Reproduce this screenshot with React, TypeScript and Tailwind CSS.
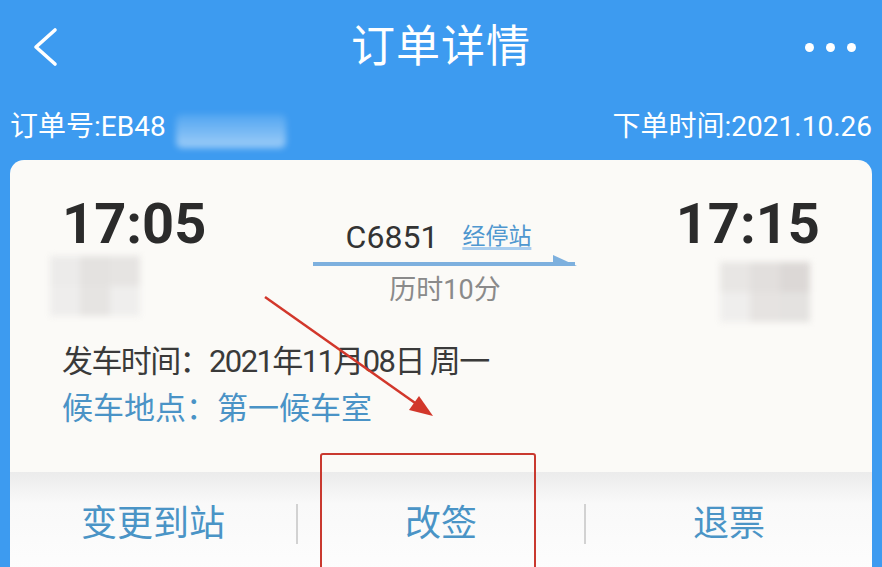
function Blur({ cells }: { cells: string[][] }) {
    return (
        <div className="flex flex-col blur-[3px]">
            {cells.map((row, i) => (
                <div key={i} className="flex">
                    {row.map((c, j) => (
                        <div key={j} className="w-[30px] h-[30px]" style={{ background: c }} />
                    ))}
                </div>
            ))}
        </div>
    )
}

export default function App() {
    return (
        <div className="relative h-[567px] w-[882px] overflow-hidden bg-[#3d9bf0] font-[Roboto,'Noto_Sans_CJK_SC',sans-serif]">
            {/* header */}
            <div className="grid grid-cols-[1fr_auto_1fr] items-center h-[94px] px-[24px] text-white">
                <svg width="30" height="40" viewBox="0 0 30 40" className="ml-[6px]">
                    <polyline points="25,3 6,20 25,37" fill="none" stroke="white" strokeWidth="3.6" strokeLinecap="round" strokeLinejoin="round" />
                </svg>
                <h1 className="text-[44px] leading-none tracking-[1px]">订单详情</h1>
                <div className="flex justify-end gap-[12px] pr-[2px]">
                    <span className="w-[9px] h-[9px] rounded-full bg-white" />
                    <span className="w-[9px] h-[9px] rounded-full bg-white" />
                    <span className="w-[9px] h-[9px] rounded-full bg-white" />
                </div>
            </div>

            {/* order row */}
            <div className="flex items-center justify-between h-[66px] px-[10px] text-white text-[28px]">
                <div className="flex items-center">
                    <span>订单号:EB48</span>
                    <div className="ml-[10px] w-[110px] h-[34px] mt-[8px] rounded-md bg-gradient-to-b from-white/10 to-white/50 blur-[3px]" />
                </div>
                <span>下单时间:2021.10.26</span>
            </div>

            {/* card */}
            <div className="mx-[10px] rounded-t-[14px] bg-[#fbfaf7] overflow-hidden">
                <div className="px-[52px] pt-[36px] pb-[40px]">
                    <div className="flex justify-between items-start">
                        <div className="flex flex-col w-[150px]">
                            <span className="text-[56px] font-bold leading-none text-[#2b2b2b]">17:05</span>
                            <div className="mt-[4px] -ml-[12px]">
                                <Blur cells={[["#ecebea", "#e4e2e0", "#e6e4e2"], ["#eeedec", "#e6e4e2", "#efeeed"]]} />
                            </div>
                        </div>

                        <div className="flex flex-col items-center mt-[23px] ml-[8px]">
                            <div className="flex items-center h-[36px] gap-[24px] mr-[13px]">
                                <span className="text-[32px] text-[#333]">C6851</span>
                                <span className="text-[23px] text-[#4f97cf] underline decoration-[#a9cdee] decoration-[3px] underline-offset-[3px]">经停站</span>
                            </div>
                            <svg width="264" height="12" viewBox="0 0 264 12" className="block">
                                <rect x="0" y="7" width="262" height="4" fill="#7db0de" />
                                <polygon points="240,0 264,11 240,11" fill="#7db0de" />
                            </svg>
                            <span className="mt-[8px] text-[27px] leading-[30px] text-[#8a8a8a]">历时10分</span>
                        </div>

                        <div className="flex flex-col items-end w-[150px]">
                            <span className="text-[56px] font-bold leading-none text-[#2b2b2b]">17:15</span>
                            <div className="mt-[10px] mr-[10px]">
                                <Blur cells={[["#e8e6e4", "#e2dfdd", "#dcd8d6"], ["#efeeed", "#e6e3e1", "#e4e2e0"]]} />
                            </div>
                        </div>
                    </div>

                    <div className="mt-[16px] text-[31px] leading-[47px]">
                        <p className="text-[#3a3a3a] tracking-[-1.6px]">发车时间：2021年11月08日 周一</p>
                        <p className="text-[#4a93c6]">候车地点：第一候车室</p>
                    </div>
                </div>

                <div className="grid grid-cols-[1fr_auto_1fr_auto_1fr] items-center h-[104px] bg-linear-to-b from-[#ebebeb] via-[#f9f9f9] via-30% to-[#fdfdfd] text-[36px] text-[#4a94c6]">
                    <span className="text-center">变更到站</span>
                    <span className="w-[2px] h-[40px] bg-[#d2d2d2]" />
                    <span className="text-center">改签</span>
                    <span className="w-[2px] h-[40px] bg-[#d2d2d2]" />
                    <span className="text-center">退票</span>
                </div>
            </div>

            {/* annotation: red arrow and box */}
            <svg className="absolute left-0 top-0 pointer-events-none" width="882" height="567">
                <line x1="265" y1="297" x2="418" y2="405" stroke="#d2372b" strokeWidth="2.5" />
                <polygon points="409,410 419,396 433,416" fill="#d2372b" />
            </svg>
            <div className="absolute left-[320px] top-[453px] w-[216px] h-[130px] border-2 border-[#c9392f] rounded-[3px]" />
        </div>
    )
}
